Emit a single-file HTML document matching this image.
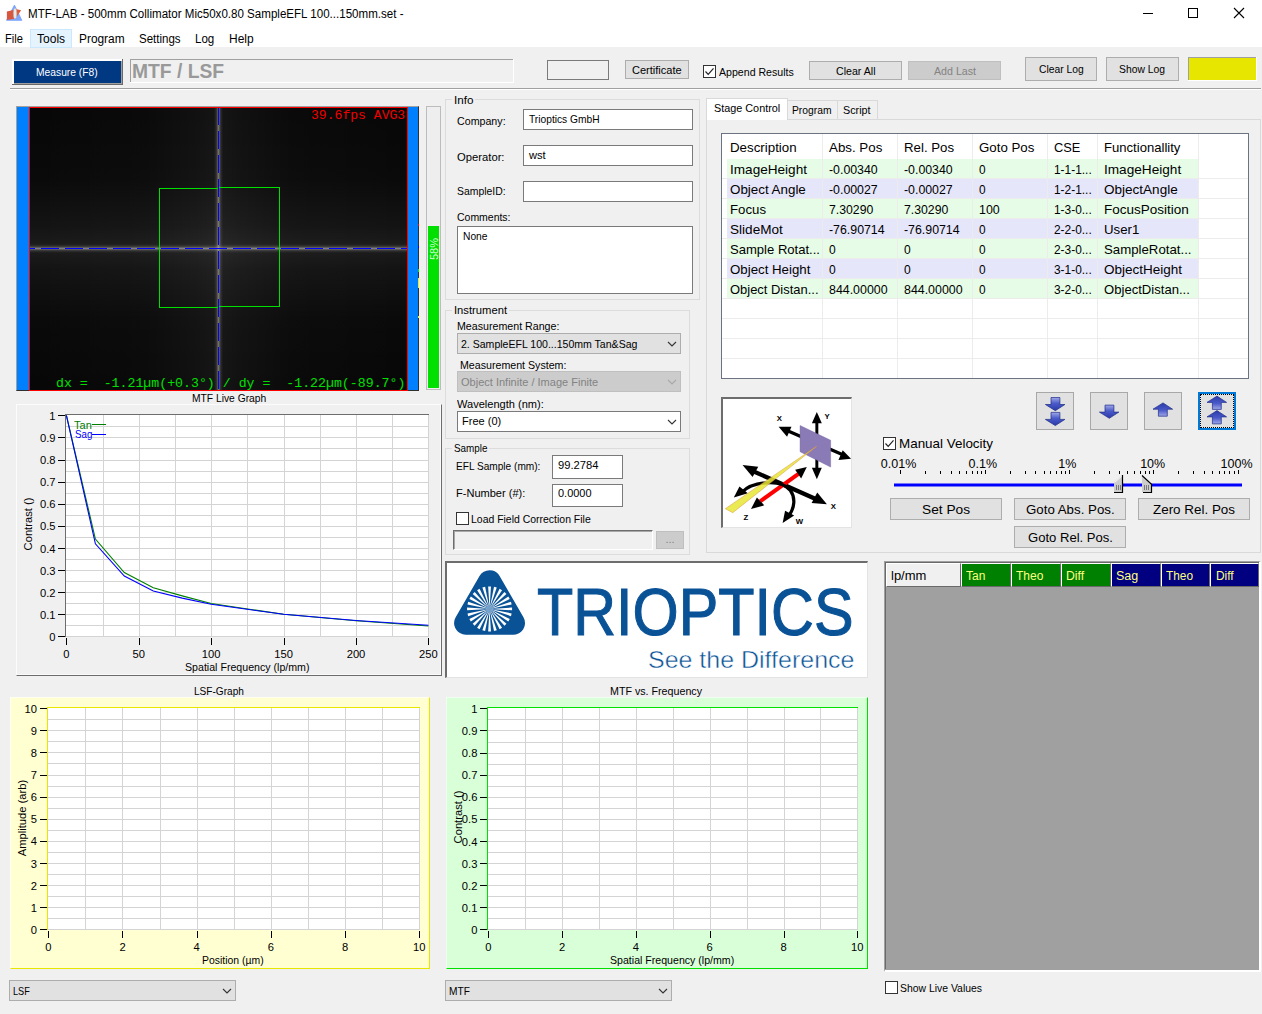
<!DOCTYPE html>
<html><head><meta charset="utf-8"><title>MTF-LAB</title>
<style>
html,body{margin:0;padding:0;}
body{width:1262px;height:1014px;position:relative;overflow:hidden;background:#f0f0f0;font-family:"Liberation Sans",sans-serif;}
body>div,body>svg{position:absolute;box-sizing:border-box;}
.t{white-space:pre;}
</style></head><body>
<div style="left:0px;top:0px;width:1262px;height:47px;background:#fff"></div>
<svg style="left:0;top:0" width="26" height="24" viewBox="0 0 26 24">
<polygon points="14.45,5.6 21.6,20.2 6.7,20.2" fill="#7fa6fa" stroke="#7fa6fa" stroke-width="1.2" stroke-linejoin="round"/>
<polygon points="6.9,11.6 14.4,9.7 14.4,18.8 6.9,20.1" fill="#d8553e"/>
<polygon points="15.6,8.9 21.1,10.3 16.6,17" fill="#e0583a"/>
<ellipse cx="15.05" cy="13.5" rx="1.7" ry="5.3" fill="#e6e9ea" stroke="#b5a89e" stroke-width="0.5"/>
</svg>
<div class="t" style="left:27.60px;top:8.42px;font-size:12.5px;line-height:12.5px;color:#000;transform:scaleX(0.9251);transform-origin:0 0;">MTF-LAB - 500mm Collimator Mic50x0.80 SampleEFL 100...150mm.set -</div>
<div style="left:1143px;top:13px;width:10px;height:1px;background:#000"></div>
<div style="left:1188px;top:8px;width:10px;height:10px;border:1px solid #000"></div>
<svg style="left:1233px;top:7px" width="12" height="12" viewBox="0 0 12 12"><path d="M1,1 L11,11 M11,1 L1,11" stroke="#000" stroke-width="1.1"/></svg>
<div style="left:30px;top:29px;width:42px;height:19px;background:#e5f3ff;border:1px solid #cce8ff"></div>
<div class="t" style="left:5.30px;top:32.59px;font-size:12.3px;line-height:12.3px;color:#000;transform:scaleX(0.9028);transform-origin:0 0;">File</div>
<div class="t" style="left:36.80px;top:32.59px;font-size:12.3px;line-height:12.3px;color:#000;transform:scaleX(0.9785);transform-origin:0 0;">Tools</div>
<div class="t" style="left:79.20px;top:32.59px;font-size:12.3px;line-height:12.3px;color:#000;transform:scaleX(0.9670);transform-origin:0 0;">Program</div>
<div class="t" style="left:139.10px;top:32.59px;font-size:12.3px;line-height:12.3px;color:#000;transform:scaleX(0.9361);transform-origin:0 0;">Settings</div>
<div class="t" style="left:195.30px;top:32.59px;font-size:12.3px;line-height:12.3px;color:#000;transform:scaleX(0.9400);transform-origin:0 0;">Log</div>
<div class="t" style="left:229.00px;top:32.59px;font-size:12.3px;line-height:12.3px;color:#000;transform:scaleX(0.9725);transform-origin:0 0;">Help</div>
<div style="left:12px;top:59px;width:111px;height:26px;background:#696969"></div>
<div style="left:12px;top:59px;width:110px;height:25px;background:#fff"></div>
<div style="left:14px;top:61px;width:108px;height:23px;background:#a0a0a0"></div>
<div style="left:14px;top:61px;width:107px;height:22px;background:#003882"></div>
<div class="t" style="left:36.15px;top:66.09px;font-size:11.7px;line-height:11.7px;color:#fff;transform:scaleX(0.8795);transform-origin:0 0;">Measure (F8)</div>
<div style="left:130px;top:59px;width:384px;height:24px;background:#fff"></div>
<div style="left:130px;top:59px;width:383px;height:23px;background:#a0a0a0"></div>
<div style="left:131px;top:60px;width:382px;height:22px;background:#f0f0f0"></div>
<div class="t" style="left:131.90px;top:61.07px;font-size:20px;line-height:20px;color:#999;font-weight:700;transform:scaleX(0.9639);transform-origin:0 0;">MTF / LSF</div>
<div style="left:547px;top:60px;width:62px;height:20px;border:1px solid #7a7a7a;background:#f0f0f0"></div>
<div style="left:625px;top:60px;width:64px;height:19px;border:1px solid #adadad;background:#e1e1e1"></div>
<div class="t" style="left:631.65px;top:65.26px;font-size:11.5px;line-height:11.5px;color:#000;transform:scaleX(0.9598);transform-origin:0 0;">Certificate</div>
<div style="left:703px;top:65px;width:13px;height:13px;border:1px solid #333;background:#fff"></div>
<svg style="left:703px;top:65px" width="13" height="13" viewBox="0 0 13 13"><path d="M2.5,6.5 L5.2,9.3 L10.5,3.3" fill="none" stroke="#222" stroke-width="1.2"/></svg>
<div class="t" style="left:718.60px;top:67.01px;font-size:11.8px;line-height:11.8px;color:#000;transform:scaleX(0.8980);transform-origin:0 0;">Append Results</div>
<div style="left:809px;top:61px;width:93px;height:19px;border:1px solid #adadad;background:#e1e1e1"></div>
<div class="t" style="left:835.75px;top:66.26px;font-size:11.5px;line-height:11.5px;color:#000;transform:scaleX(0.9223);transform-origin:0 0;">Clear All</div>
<div style="left:908px;top:61px;width:93px;height:19px;border:1px solid #bfbfbf;background:#cccccc"></div>
<div class="t" style="left:933.50px;top:66.26px;font-size:11.5px;line-height:11.5px;color:#838383;transform:scaleX(0.9250);transform-origin:0 0;">Add Last</div>
<div style="left:1025px;top:57px;width:72px;height:24px;border:1px solid #adadad;background:#e1e1e1"></div>
<div class="t" style="left:1038.65px;top:64.26px;font-size:11.5px;line-height:11.5px;color:#000;transform:scaleX(0.8962);transform-origin:0 0;">Clear Log</div>
<div style="left:1106px;top:57px;width:73px;height:24px;border:1px solid #adadad;background:#e1e1e1"></div>
<div class="t" style="left:1119.30px;top:64.26px;font-size:11.5px;line-height:11.5px;color:#000;transform:scaleX(0.8992);transform-origin:0 0;">Show Log</div>
<div style="left:1188px;top:57px;width:69px;height:24px;background:#fff"></div>
<div style="left:1188px;top:57px;width:68px;height:23px;background:#a0a0a0"></div>
<div style="left:1189px;top:58px;width:67px;height:22px;background:#e6e600"></div>
<div style="left:10px;top:88px;width:1251px;height:1px;background:#a0a0a0"></div>
<div style="left:10px;top:89px;width:1251px;height:1px;background:#fff"></div>
<div style="left:16px;top:106px;width:403px;height:285px;background:#0080ff;border-top:1px solid #a0a0a0;border-left:1px solid #a0a0a0;border-right:1px solid #303030;border-bottom:1px solid #303030"></div>
<div style="left:29px;top:107px;width:379px;height:284px;background:#070707;border:1px solid #ff0000"></div>
<div style="left:30px;top:108px;width:377px;height:282px;background:linear-gradient(to bottom, rgba(255,255,255,0) 0%, rgba(255,255,255,0.012) 25%, rgba(255,255,255,0.05) 42%, rgba(255,255,255,0.085) 49.5%, rgba(255,255,255,0.05) 57%, rgba(255,255,255,0.012) 75%, rgba(255,255,255,0) 100%)"></div>
<div style="left:30px;top:108px;width:377px;height:282px;background:linear-gradient(to right, rgba(255,255,255,0) 0%, rgba(255,255,255,0.01) 30%, rgba(255,255,255,0.04) 44%, rgba(255,255,255,0.06) 50%, rgba(255,255,255,0.04) 56%, rgba(255,255,255,0.01) 70%, rgba(255,255,255,0) 100%)"></div>
<div style="left:30px;top:244px;width:377px;height:9px;background:linear-gradient(to bottom, rgba(200,200,200,0) 0%, rgba(200,200,200,0.12) 25%, rgba(220,220,220,0.5) 50%, rgba(200,200,200,0.12) 75%, rgba(200,200,200,0) 100%)"></div>
<div style="left:214px;top:108px;width:9px;height:282px;background:linear-gradient(to right, rgba(200,200,200,0) 0%, rgba(200,200,200,0.12) 25%, rgba(220,220,220,0.45) 50%, rgba(200,200,200,0.12) 75%, rgba(200,200,200,0) 100%)"></div>
<svg style="left:0;top:0" width="1262" height="420" viewBox="0 0 1262 420">
<g fill="none" stroke="#00e000" stroke-width="1" shape-rendering="crispEdges">
<path d="M218.5,188.5 H159.5 V307.5 H218.5"/>
<path d="M218.5,187.5 H279.5 V306.5 H218.5"/>
</g>
<g stroke="#0000ff" stroke-width="1.3" fill="none" shape-rendering="crispEdges">
<line x1="30" y1="248.5" x2="407" y2="248.5" stroke-dasharray="18 6" stroke-dashoffset="13"/>
<line x1="218.5" y1="108" x2="218.5" y2="390" stroke-dasharray="18 6" stroke-dashoffset="1"/>
</g>
</svg>
<div class="t" style="left:311.40px;top:109.04px;font-size:13px;line-height:13px;color:#f00000;font-family:'Liberation Mono',monospace;transform:scaleX(1.0061);transform-origin:0 0;">39.6fps AVG3</div>
<div class="t" style="left:55.80px;top:376.89px;font-size:13.2px;line-height:13.2px;color:#00e000;font-family:'Liberation Mono',monospace;transform:scaleX(1.0034);transform-origin:0 0;">dx =  -1.21µm(+0.3°) / dy =  -1.22µm(-89.7°)</div>
<div style="left:426px;top:106px;width:15px;height:284px;border:1px solid #bcbcbc;background:#eeeeee"></div>
<div style="left:418px;top:224px;width:1px;height:2px;background:#ff0000"></div>
<div style="left:418px;top:246px;width:1px;height:2px;background:#0000ff"></div>
<div style="left:418px;top:269px;width:1px;height:3px;background:#00e000"></div>
<div style="left:418px;top:278px;width:1px;height:10px;background:#f0f000"></div>
<div style="left:418px;top:316px;width:1px;height:2px;background:#f0f000"></div>
<div style="left:428px;top:226px;width:11px;height:162px;background:#00e000"></div>
<div class="t" style="left:433.5px;top:249px;width:0;height:0;"><div style="position:absolute;left:-12px;top:-6px;width:24px;height:12px;font-size:11px;line-height:12px;color:#d8ffd8;text-align:center;transform:rotate(-90deg);">58%</div></div>
<div class="t" style="left:191.50px;top:392.69px;font-size:11px;line-height:11px;color:#000;transform:scaleX(0.9337);transform-origin:0 0;">MTF Live Graph</div>
<div style="left:16px;top:404px;width:426px;height:272px;border-top:1px solid #fcfcfc;border-left:1px solid #fcfcfc;border-right:1px solid #6d6d6d;border-bottom:1px solid #6d6d6d;box-shadow:inset -1px -1px 0 #fafafa"></div>
<svg style="left:0;top:0" width="1262" height="1014" viewBox="0 0 1262 1014" shape-rendering="crispEdges"><rect x="66" y="415" width="363" height="222" fill="#fff"/><g fill="#d4d4d4"><rect x="103" y="415" width="1" height="222"/><rect x="139" y="415" width="1" height="222"/><rect x="175" y="415" width="1" height="222"/><rect x="211" y="415" width="1" height="222"/><rect x="247" y="415" width="1" height="222"/><rect x="284" y="415" width="1" height="222"/><rect x="320" y="415" width="1" height="222"/><rect x="356" y="415" width="1" height="222"/><rect x="392" y="415" width="1" height="222"/><rect x="428" y="415" width="1" height="222"/><rect x="66" y="636" width="363" height="1"/><rect x="66" y="625" width="363" height="1"/><rect x="66" y="614" width="363" height="1"/><rect x="66" y="603" width="363" height="1"/><rect x="66" y="592" width="363" height="1"/><rect x="66" y="581" width="363" height="1"/><rect x="66" y="570" width="363" height="1"/><rect x="66" y="559" width="363" height="1"/><rect x="66" y="548" width="363" height="1"/><rect x="66" y="537" width="363" height="1"/><rect x="66" y="526" width="363" height="1"/><rect x="66" y="515" width="363" height="1"/><rect x="66" y="504" width="363" height="1"/><rect x="66" y="493" width="363" height="1"/><rect x="66" y="482" width="363" height="1"/><rect x="66" y="471" width="363" height="1"/><rect x="66" y="460" width="363" height="1"/><rect x="66" y="448" width="363" height="1"/><rect x="66" y="437" width="363" height="1"/><rect x="66" y="426" width="363" height="1"/></g><rect x="65" y="414" width="364" height="1" fill="#6d6d6d"/><rect x="65" y="414" width="1" height="223" fill="#6d6d6d"/></svg>
<svg style="left:0;top:0" width="1262" height="1014"><polyline points="66.4,415.3 95.4,539.1 124.3,572.5 153.3,587.8 182.2,595.9 211.2,603.5 283.6,614.3 356.0,620.7 428.4,626.0" fill="none" stroke="#008000" stroke-width="1.1"/><polyline points="66.4,415.3 95.4,543.8 124.3,576.0 153.3,591.1 182.2,598.1 211.2,604.3 283.6,614.3 356.0,620.5 428.4,625.3" fill="none" stroke="#0000ff" stroke-width="1.1"/><line x1="92" y1="424.5" x2="106" y2="424.5" stroke="#008000" stroke-width="1"/><line x1="92" y1="434.5" x2="106" y2="434.5" stroke="#0000ff" stroke-width="1"/></svg>
<div class="t" style="left:74.20px;top:419.69px;font-size:11px;line-height:11px;color:#008000;transform:scaleX(1.0028);transform-origin:0 0;">Tan</div>
<div class="t" style="left:74.70px;top:428.69px;font-size:11px;line-height:11px;color:#0000ff;transform:scaleX(0.8836);transform-origin:0 0;">Sag</div>
<svg style="left:0;top:0" width="1262" height="1014" shape-rendering="crispEdges"><g fill="#000"><rect x="58" y="636" width="7" height="1"/><rect x="58" y="614" width="7" height="1"/><rect x="58" y="592" width="7" height="1"/><rect x="58" y="570" width="7" height="1"/><rect x="58" y="548" width="7" height="1"/><rect x="58" y="526" width="7" height="1"/><rect x="58" y="504" width="7" height="1"/><rect x="58" y="482" width="7" height="1"/><rect x="58" y="460" width="7" height="1"/><rect x="58" y="437" width="7" height="1"/><rect x="58" y="415" width="7" height="1"/><rect x="66" y="638" width="1" height="7"/><rect x="139" y="638" width="1" height="7"/><rect x="211" y="638" width="1" height="7"/><rect x="284" y="638" width="1" height="7"/><rect x="356" y="638" width="1" height="7"/><rect x="428" y="638" width="1" height="7"/></g></svg>
<div class="t" style="left:49.37px;top:631.52px;font-size:11.2px;line-height:11.2px;color:#000;">0</div>
<div class="t" style="left:40.04px;top:609.52px;font-size:11.2px;line-height:11.2px;color:#000;">0.1</div>
<div class="t" style="left:40.04px;top:587.52px;font-size:11.2px;line-height:11.2px;color:#000;">0.2</div>
<div class="t" style="left:40.04px;top:565.52px;font-size:11.2px;line-height:11.2px;color:#000;">0.3</div>
<div class="t" style="left:40.04px;top:543.52px;font-size:11.2px;line-height:11.2px;color:#000;">0.4</div>
<div class="t" style="left:40.04px;top:520.52px;font-size:11.2px;line-height:11.2px;color:#000;">0.5</div>
<div class="t" style="left:40.04px;top:498.52px;font-size:11.2px;line-height:11.2px;color:#000;">0.6</div>
<div class="t" style="left:40.04px;top:476.52px;font-size:11.2px;line-height:11.2px;color:#000;">0.7</div>
<div class="t" style="left:40.04px;top:454.52px;font-size:11.2px;line-height:11.2px;color:#000;">0.8</div>
<div class="t" style="left:40.04px;top:432.52px;font-size:11.2px;line-height:11.2px;color:#000;">0.9</div>
<div class="t" style="left:49.37px;top:410.52px;font-size:11.2px;line-height:11.2px;color:#000;">1</div>
<div class="t" style="left:63.28px;top:648.52px;font-size:11.2px;line-height:11.2px;color:#000;">0</div>
<div class="t" style="left:132.57px;top:648.52px;font-size:11.2px;line-height:11.2px;color:#000;">50</div>
<div class="t" style="left:201.86px;top:648.52px;font-size:11.2px;line-height:11.2px;color:#000;">100</div>
<div class="t" style="left:274.26px;top:648.52px;font-size:11.2px;line-height:11.2px;color:#000;">150</div>
<div class="t" style="left:346.66px;top:648.52px;font-size:11.2px;line-height:11.2px;color:#000;">200</div>
<div class="t" style="left:419.06px;top:648.52px;font-size:11.2px;line-height:11.2px;color:#000;">250</div>
<div class="t" style="left:184.65px;top:661.52px;font-size:11.2px;line-height:11.2px;color:#000;transform:scaleX(0.9490);transform-origin:0 0;">Spatial Frequency (lp/mm)</div>
<div class="t" style="left:27.5px;top:524px;width:0;height:0;"><div style="position:absolute;left:-40px;top:-7px;width:80px;height:14px;font-size:11.2px;line-height:14px;text-align:center;transform:rotate(-90deg);">Contrast ()</div></div>
<div style="left:445px;top:99px;width:255px;height:201px;border:1px solid #dcdcdc"></div>
<div style="left:451.8px;top:98px;width:23.5px;height:3px;background:#f0f0f0"></div>
<div class="t" style="left:453.80px;top:95.26px;font-size:11.5px;line-height:11.5px;color:#000;transform:scaleX(1.0163);transform-origin:0 0;">Info</div>
<div class="t" style="left:456.70px;top:116.26px;font-size:11.5px;line-height:11.5px;color:#000;transform:scaleX(0.9271);transform-origin:0 0;">Company:</div>
<div class="t" style="left:456.70px;top:152.26px;font-size:11.5px;line-height:11.5px;color:#000;transform:scaleX(0.9778);transform-origin:0 0;">Operator:</div>
<div class="t" style="left:456.70px;top:186.26px;font-size:11.5px;line-height:11.5px;color:#000;transform:scaleX(0.9052);transform-origin:0 0;">SampleID:</div>
<div class="t" style="left:456.70px;top:212.26px;font-size:11.5px;line-height:11.5px;color:#000;transform:scaleX(0.9099);transform-origin:0 0;">Comments:</div>
<div style="left:523px;top:109px;width:170px;height:21px;border:1px solid #7a7a7a;background:#fff"></div>
<div style="left:523px;top:145px;width:170px;height:21px;border:1px solid #7a7a7a;background:#fff"></div>
<div style="left:523px;top:181px;width:170px;height:21px;border:1px solid #7a7a7a;background:#fff"></div>
<div style="left:457px;top:226px;width:236px;height:68px;border:1px solid #7a7a7a;background:#fff"></div>
<div class="t" style="left:528.80px;top:114.26px;font-size:11.5px;line-height:11.5px;color:#000;transform:scaleX(0.8886);transform-origin:0 0;">Trioptics GmbH</div>
<div class="t" style="left:528.80px;top:150.26px;font-size:11.5px;line-height:11.5px;color:#000;transform:scaleX(0.9681);transform-origin:0 0;">wst</div>
<div class="t" style="left:462.50px;top:231.26px;font-size:11.5px;line-height:11.5px;color:#000;transform:scaleX(0.8909);transform-origin:0 0;">None</div>
<div style="left:445px;top:310px;width:245px;height:129px;border:1px solid #dcdcdc"></div>
<div style="left:451.6px;top:309px;width:57px;height:3px;background:#f0f0f0"></div>
<div class="t" style="left:453.60px;top:305.26px;font-size:11.5px;line-height:11.5px;color:#000;transform:scaleX(0.9756);transform-origin:0 0;">Instrument</div>
<div class="t" style="left:456.50px;top:321.26px;font-size:11.5px;line-height:11.5px;color:#000;transform:scaleX(0.9259);transform-origin:0 0;">Measurement Range:</div>
<div style="left:457px;top:333px;width:224px;height:21px;border:1px solid #adadad;background:#e1e1e1"></div>
<div class="t" style="left:460.90px;top:339.26px;font-size:11.5px;line-height:11.5px;color:#000;transform:scaleX(0.9167);transform-origin:0 0;">2. SampleEFL 100...150mm Tan&amp;Sag</div>
<svg style="left:667px;top:340px" width="10" height="8" viewBox="0 0 10 8"><path d="M1,2 L5,6 L9,2" fill="none" stroke="#333" stroke-width="1.1"/></svg>
<div class="t" style="left:459.60px;top:360.26px;font-size:11.5px;line-height:11.5px;color:#000;transform:scaleX(0.9248);transform-origin:0 0;">Measurement System:</div>
<div style="left:457px;top:371px;width:224px;height:21px;border:1px solid #bfbfbf;background:#cccccc"></div>
<div class="t" style="left:460.90px;top:377.26px;font-size:11.5px;line-height:11.5px;color:#838383;transform:scaleX(0.9582);transform-origin:0 0;">Object Infinite / Image Finite</div>
<svg style="left:667px;top:378px" width="10" height="8" viewBox="0 0 10 8"><path d="M1,2 L5,6 L9,2" fill="none" stroke="#a8a8a8" stroke-width="1.1"/></svg>
<div class="t" style="left:456.50px;top:399.26px;font-size:11.5px;line-height:11.5px;color:#000;transform:scaleX(0.9609);transform-origin:0 0;">Wavelength (nm):</div>
<div style="left:457px;top:411px;width:224px;height:21px;border:1px solid #7a7a7a;background:#fff"></div>
<div class="t" style="left:462.20px;top:416.26px;font-size:11.5px;line-height:11.5px;color:#000;transform:scaleX(0.9583);transform-origin:0 0;">Free (0)</div>
<svg style="left:667px;top:418px" width="10" height="8" viewBox="0 0 10 8"><path d="M1,2 L5,6 L9,2" fill="none" stroke="#333" stroke-width="1.1"/></svg>
<div style="left:445px;top:448px;width:245px;height:107px;border:1px solid #dcdcdc"></div>
<div style="left:451.6px;top:447px;width:37.5px;height:3px;background:#f0f0f0"></div>
<div class="t" style="left:453.60px;top:443.26px;font-size:11.5px;line-height:11.5px;color:#000;transform:scaleX(0.8590);transform-origin:0 0;">Sample</div>
<div class="t" style="left:455.70px;top:461.26px;font-size:11.5px;line-height:11.5px;color:#000;transform:scaleX(0.8786);transform-origin:0 0;">EFL Sample (mm):</div>
<div style="left:552px;top:455px;width:71px;height:24px;border:1px solid #7a7a7a;background:#fff"></div>
<div class="t" style="left:557.60px;top:460.26px;font-size:11.5px;line-height:11.5px;color:#000;transform:scaleX(0.9741);transform-origin:0 0;">99.2784</div>
<div class="t" style="left:455.70px;top:488.26px;font-size:11.5px;line-height:11.5px;color:#000;transform:scaleX(0.9598);transform-origin:0 0;">F-Number (#):</div>
<div style="left:552px;top:484px;width:71px;height:23px;border:1px solid #7a7a7a;background:#fff"></div>
<div class="t" style="left:557.60px;top:488.26px;font-size:11.5px;line-height:11.5px;color:#000;transform:scaleX(0.9520);transform-origin:0 0;">0.0000</div>
<div style="left:456px;top:512px;width:13px;height:13px;border:1px solid #333;background:#fff"></div>
<div class="t" style="left:471.40px;top:514.26px;font-size:11.5px;line-height:11.5px;color:#000;transform:scaleX(0.9091);transform-origin:0 0;">Load Field Correction File</div>
<div style="left:453px;top:530px;width:200px;height:20px;border-top:1px solid #6d6d6d;border-left:1px solid #6d6d6d;border-bottom:1px solid #fff;border-right:1px solid #fff;background:#f0f0f0;box-shadow:inset 1px 1px 0 #a8a8a8"></div>
<div style="left:656px;top:531px;width:28px;height:18px;border:1px solid #bfbfbf;background:#cccccc"></div>
<div class="t" style="left:665.41px;top:533.69px;font-size:11px;line-height:11px;color:#838383;">...</div>
<div style="left:706px;top:119px;width:555px;height:434px;border:1px solid #d9d9d9"></div>
<div style="left:787px;top:100px;width:51px;height:20px;border:1px solid #d9d9d9;background:#f0f0f0"></div>
<div style="left:837px;top:100px;width:41px;height:20px;border:1px solid #d9d9d9;background:#f0f0f0"></div>
<div style="left:706px;top:98px;width:82px;height:22px;border:1px solid #d9d9d9;border-bottom:none;background:#fff"></div>
<div class="t" style="left:713.60px;top:103.26px;font-size:11.5px;line-height:11.5px;color:#000;transform:scaleX(0.9413);transform-origin:0 0;">Stage Control</div>
<div class="t" style="left:791.50px;top:105.26px;font-size:11.5px;line-height:11.5px;color:#000;transform:scaleX(0.8955);transform-origin:0 0;">Program</div>
<div class="t" style="left:843.20px;top:105.26px;font-size:11.5px;line-height:11.5px;color:#000;transform:scaleX(0.9386);transform-origin:0 0;">Script</div>
<div style="left:721px;top:133px;width:528px;height:246px;border:1px solid #6b7280;background:#fff"></div>
<svg style="left:0;top:0" width="1262" height="1014"><rect x="727" y="159" width="471" height="20" fill="#e6fce6"/><rect x="727" y="179" width="471" height="20" fill="#e6e6fa"/><rect x="727" y="199" width="471" height="20" fill="#e6fce6"/><rect x="727" y="219" width="471" height="20" fill="#e6e6fa"/><rect x="727" y="239" width="471" height="19" fill="#e6fce6"/><rect x="727" y="258" width="471" height="20" fill="#e6e6fa"/><rect x="727" y="278" width="471" height="20" fill="#e6fce6"/><g stroke="#ececec" stroke-width="1" shape-rendering="crispEdges"><line x1="722" y1="178.6" x2="1248" y2="178.6"/><line x1="722" y1="198.5" x2="1248" y2="198.5"/><line x1="722" y1="218.5" x2="1248" y2="218.5"/><line x1="722" y1="238.5" x2="1248" y2="238.5"/><line x1="722" y1="258.5" x2="1248" y2="258.5"/><line x1="722" y1="278.5" x2="1248" y2="278.5"/><line x1="722" y1="298.5" x2="1248" y2="298.5"/><line x1="722" y1="318.5" x2="1248" y2="318.5"/><line x1="722" y1="338.5" x2="1248" y2="338.5"/><line x1="722" y1="358.5" x2="1248" y2="358.5"/><line x1="822.5" y1="134" x2="822.5" y2="378"/><line x1="897.2" y1="134" x2="897.2" y2="378"/><line x1="972.6" y1="134" x2="972.6" y2="378"/><line x1="1047.4" y1="134" x2="1047.4" y2="378"/><line x1="1097.5" y1="134" x2="1097.5" y2="378"/><line x1="1198.0" y1="134" x2="1198.0" y2="378"/></g></svg>
<div class="t" style="left:729.50px;top:140.57px;font-size:13.5px;line-height:13.5px;color:#000;transform:scaleX(0.9862);transform-origin:0 0;">Description</div>
<div class="t" style="left:829.00px;top:140.57px;font-size:13.5px;line-height:13.5px;color:#000;transform:scaleX(0.9865);transform-origin:0 0;">Abs. Pos</div>
<div class="t" style="left:904.10px;top:140.57px;font-size:13.5px;line-height:13.5px;color:#000;transform:scaleX(0.9818);transform-origin:0 0;">Rel. Pos</div>
<div class="t" style="left:979.10px;top:140.57px;font-size:13.5px;line-height:13.5px;color:#000;transform:scaleX(0.9826);transform-origin:0 0;">Goto Pos</div>
<div class="t" style="left:1054.00px;top:140.57px;font-size:13.5px;line-height:13.5px;color:#000;transform:scaleX(0.9472);transform-origin:0 0;">CSE</div>
<div class="t" style="left:1103.90px;top:140.57px;font-size:13.5px;line-height:13.5px;color:#000;transform:scaleX(0.9696);transform-origin:0 0;">Functionallity</div>
<div class="t" style="left:729.50px;top:162.57px;font-size:13.5px;line-height:13.5px;color:#000;transform:scaleX(1.0059);transform-origin:0 0;">ImageHeight</div>
<div class="t" style="left:829.00px;top:162.57px;font-size:13.5px;line-height:13.5px;color:#000;transform:scaleX(0.9137);transform-origin:0 0;">-0.00340</div>
<div class="t" style="left:904.10px;top:162.57px;font-size:13.5px;line-height:13.5px;color:#000;transform:scaleX(0.9137);transform-origin:0 0;">-0.00340</div>
<div class="t" style="left:979.10px;top:162.57px;font-size:13.5px;line-height:13.5px;color:#000;transform:scaleX(0.8782);transform-origin:0 0;">0</div>
<div class="t" style="left:1054.00px;top:162.57px;font-size:13.5px;line-height:13.5px;color:#000;transform:scaleX(0.8812);transform-origin:0 0;">1-1-1...</div>
<div class="t" style="left:1103.90px;top:162.57px;font-size:13.5px;line-height:13.5px;color:#000;transform:scaleX(1.0085);transform-origin:0 0;">ImageHeight</div>
<div class="t" style="left:729.50px;top:182.57px;font-size:13.5px;line-height:13.5px;color:#000;transform:scaleX(0.9900);transform-origin:0 0;">Object Angle</div>
<div class="t" style="left:829.00px;top:182.57px;font-size:13.5px;line-height:13.5px;color:#000;transform:scaleX(0.9137);transform-origin:0 0;">-0.00027</div>
<div class="t" style="left:904.10px;top:182.57px;font-size:13.5px;line-height:13.5px;color:#000;transform:scaleX(0.9137);transform-origin:0 0;">-0.00027</div>
<div class="t" style="left:979.10px;top:182.57px;font-size:13.5px;line-height:13.5px;color:#000;transform:scaleX(0.8782);transform-origin:0 0;">0</div>
<div class="t" style="left:1054.00px;top:182.57px;font-size:13.5px;line-height:13.5px;color:#000;transform:scaleX(0.8812);transform-origin:0 0;">1-2-1...</div>
<div class="t" style="left:1103.90px;top:182.57px;font-size:13.5px;line-height:13.5px;color:#000;transform:scaleX(1.0021);transform-origin:0 0;">ObjectAngle</div>
<div class="t" style="left:729.50px;top:202.57px;font-size:13.5px;line-height:13.5px;color:#000;transform:scaleX(0.9792);transform-origin:0 0;">Focus</div>
<div class="t" style="left:829.00px;top:202.57px;font-size:13.5px;line-height:13.5px;color:#000;transform:scaleX(0.9076);transform-origin:0 0;">7.30290</div>
<div class="t" style="left:904.10px;top:202.57px;font-size:13.5px;line-height:13.5px;color:#000;transform:scaleX(0.9076);transform-origin:0 0;">7.30290</div>
<div class="t" style="left:979.10px;top:202.57px;font-size:13.5px;line-height:13.5px;color:#000;transform:scaleX(0.9187);transform-origin:0 0;">100</div>
<div class="t" style="left:1054.00px;top:202.57px;font-size:13.5px;line-height:13.5px;color:#000;transform:scaleX(0.8812);transform-origin:0 0;">1-3-0...</div>
<div class="t" style="left:1103.90px;top:202.57px;font-size:13.5px;line-height:13.5px;color:#000;">FocusPosition</div>
<div class="t" style="left:729.50px;top:222.57px;font-size:13.5px;line-height:13.5px;color:#000;transform:scaleX(1.0051);transform-origin:0 0;">SlideMot</div>
<div class="t" style="left:829.00px;top:222.57px;font-size:13.5px;line-height:13.5px;color:#000;transform:scaleX(0.9143);transform-origin:0 0;">-76.90714</div>
<div class="t" style="left:904.10px;top:222.57px;font-size:13.5px;line-height:13.5px;color:#000;transform:scaleX(0.9143);transform-origin:0 0;">-76.90714</div>
<div class="t" style="left:979.10px;top:222.57px;font-size:13.5px;line-height:13.5px;color:#000;transform:scaleX(0.8782);transform-origin:0 0;">0</div>
<div class="t" style="left:1054.00px;top:222.57px;font-size:13.5px;line-height:13.5px;color:#000;transform:scaleX(0.8812);transform-origin:0 0;">2-2-0...</div>
<div class="t" style="left:1103.90px;top:222.57px;font-size:13.5px;line-height:13.5px;color:#000;transform:scaleX(0.9801);transform-origin:0 0;">User1</div>
<div class="t" style="left:729.50px;top:242.57px;font-size:13.5px;line-height:13.5px;color:#000;transform:scaleX(0.9673);transform-origin:0 0;">Sample Rotat...</div>
<div class="t" style="left:829.00px;top:242.57px;font-size:13.5px;line-height:13.5px;color:#000;transform:scaleX(0.8915);transform-origin:0 0;">0</div>
<div class="t" style="left:904.10px;top:242.57px;font-size:13.5px;line-height:13.5px;color:#000;transform:scaleX(0.8915);transform-origin:0 0;">0</div>
<div class="t" style="left:979.10px;top:242.57px;font-size:13.5px;line-height:13.5px;color:#000;transform:scaleX(0.8782);transform-origin:0 0;">0</div>
<div class="t" style="left:1054.00px;top:242.57px;font-size:13.5px;line-height:13.5px;color:#000;transform:scaleX(0.8812);transform-origin:0 0;">2-3-0...</div>
<div class="t" style="left:1103.90px;top:242.57px;font-size:13.5px;line-height:13.5px;color:#000;transform:scaleX(0.9799);transform-origin:0 0;">SampleRotat...</div>
<div class="t" style="left:729.50px;top:262.57px;font-size:13.5px;line-height:13.5px;color:#000;transform:scaleX(0.9829);transform-origin:0 0;">Object Height</div>
<div class="t" style="left:829.00px;top:262.57px;font-size:13.5px;line-height:13.5px;color:#000;transform:scaleX(0.8915);transform-origin:0 0;">0</div>
<div class="t" style="left:904.10px;top:262.57px;font-size:13.5px;line-height:13.5px;color:#000;transform:scaleX(0.8915);transform-origin:0 0;">0</div>
<div class="t" style="left:979.10px;top:262.57px;font-size:13.5px;line-height:13.5px;color:#000;transform:scaleX(0.8782);transform-origin:0 0;">0</div>
<div class="t" style="left:1054.00px;top:262.57px;font-size:13.5px;line-height:13.5px;color:#000;transform:scaleX(0.8812);transform-origin:0 0;">3-1-0...</div>
<div class="t" style="left:1103.90px;top:262.57px;font-size:13.5px;line-height:13.5px;color:#000;">ObjectHeight</div>
<div class="t" style="left:729.50px;top:282.57px;font-size:13.5px;line-height:13.5px;color:#000;transform:scaleX(0.9589);transform-origin:0 0;">Object Distan...</div>
<div class="t" style="left:829.00px;top:282.57px;font-size:13.5px;line-height:13.5px;color:#000;transform:scaleX(0.9181);transform-origin:0 0;">844.00000</div>
<div class="t" style="left:904.10px;top:282.57px;font-size:13.5px;line-height:13.5px;color:#000;transform:scaleX(0.9181);transform-origin:0 0;">844.00000</div>
<div class="t" style="left:979.10px;top:282.57px;font-size:13.5px;line-height:13.5px;color:#000;transform:scaleX(0.8782);transform-origin:0 0;">0</div>
<div class="t" style="left:1054.00px;top:282.57px;font-size:13.5px;line-height:13.5px;color:#000;transform:scaleX(0.8812);transform-origin:0 0;">3-2-0...</div>
<div class="t" style="left:1103.90px;top:282.57px;font-size:13.5px;line-height:13.5px;color:#000;transform:scaleX(0.9701);transform-origin:0 0;">ObjectDistan...</div>
<div style="left:721px;top:397px;width:131px;height:131px;background:#fff;border-top:2px solid #6d6d6d;border-left:2px solid #6d6d6d;border-right:1px solid #e3e3e3;border-bottom:1px solid #e3e3e3"></div>
<svg style="left:718px;top:394px" width="138" height="136" viewBox="0 0 1029 1014">
<g fill="#000" stroke="none">
<!-- Y arrow -->
<rect x="726" y="200" width="22" height="370"/>
<polygon points="737,135 700,218 774,218"/>
<polygon points="737,635 700,550 774,550"/>
<!-- top X arrow -->
<line x1="510" y1="270" x2="935" y2="455" stroke="#000" stroke-width="24"/>
<polygon points="452,245 548,245 515,318"/>
<polygon points="992,482 930,420 898,492"/>
</g>
<polygon points="612,235 840,345 840,545 612,430" fill="#8a7ab5" stroke="#6c5d9c" stroke-width="3"/>
<!-- big X arrow -->
<line x1="250" y1="570" x2="745" y2="790" stroke="#000" stroke-width="32"/>
<polygon points="183,530 300,542 258,618" fill="#000"/>
<polygon points="812,822 698,812 740,735" fill="#000"/>
<!-- red arrow -->
<line x1="315" y1="800" x2="600" y2="595" stroke="#ff0000" stroke-width="30"/>
<polygon points="246,857 290,772 345,830" fill="#000"/>
<polygon points="662,545 575,565 620,630" fill="#000"/>
<!-- W curve -->
<path d="M175,735 C260,650 470,630 540,720 C580,775 570,850 530,905" fill="none" stroke="#000" stroke-width="24"/>
<polygon points="118,772 160,690 222,740" fill="#000"/>
<polygon points="482,962 500,870 568,905" fill="#000"/>
<!-- beam -->
<polygon points="55,855 110,885 735,390" fill="#e6e635" fill-opacity="0.85" stroke="#e09a40" stroke-width="4"/>
<g font-family="Liberation Sans" font-weight="700" font-size="58" fill="#000">
<text x="438" y="205">X</text><text x="795" y="190">Y</text><text x="840" y="858">X</text><text x="190" y="940">Z</text><text x="580" y="968">W</text>
</g>
</svg>
<div style="left:1036px;top:392px;width:38px;height:38px;border:1px solid #a8a8a8;background:#e1e1e1"></div>
<svg style="left:1036px;top:392px" width="38" height="38" viewBox="0 0 38 38"><defs><linearGradient id="gd1036" x1="0" y1="0" x2="0" y2="1"><stop offset="0" stop-color="#a0a8e8"/><stop offset="0.45" stop-color="#4a5ac8"/><stop offset="1" stop-color="#2a3aa8"/></linearGradient><linearGradient id="gu1036" x1="0" y1="1" x2="0" y2="0"><stop offset="0" stop-color="#a0a8e8"/><stop offset="0.45" stop-color="#4a5ac8"/><stop offset="1" stop-color="#2a3aa8"/></linearGradient></defs><path d="M15,5.5 H23.9 V12.5 H28.9 L19.3,18.7 L9.4,12.5 H15 Z" fill="url(#gd1036)" stroke="#1c2c88" stroke-width="0.7"/><path d="M15,20.4 H23.9 V27.4 H28.9 L19.3,33.599999999999994 L9.4,27.4 H15 Z" fill="url(#gd1036)" stroke="#1c2c88" stroke-width="0.7"/></svg>
<div style="left:1090px;top:392px;width:38px;height:38px;border:1px solid #a8a8a8;background:#e1e1e1"></div>
<svg style="left:1090px;top:392px" width="38" height="38" viewBox="0 0 38 38"><defs><linearGradient id="gd1090" x1="0" y1="0" x2="0" y2="1"><stop offset="0" stop-color="#a0a8e8"/><stop offset="0.45" stop-color="#4a5ac8"/><stop offset="1" stop-color="#2a3aa8"/></linearGradient><linearGradient id="gu1090" x1="0" y1="1" x2="0" y2="0"><stop offset="0" stop-color="#a0a8e8"/><stop offset="0.45" stop-color="#4a5ac8"/><stop offset="1" stop-color="#2a3aa8"/></linearGradient></defs><path d="M15,13.1 H23.9 V20.1 H28.9 L19.3,26.299999999999997 L9.4,20.1 H15 Z" fill="url(#gd1090)" stroke="#1c2c88" stroke-width="0.7"/></svg>
<div style="left:1144px;top:392px;width:38px;height:38px;border:1px solid #a8a8a8;background:#e1e1e1"></div>
<svg style="left:1144px;top:392px" width="38" height="38" viewBox="0 0 38 38"><defs><linearGradient id="gd1144" x1="0" y1="0" x2="0" y2="1"><stop offset="0" stop-color="#a0a8e8"/><stop offset="0.45" stop-color="#4a5ac8"/><stop offset="1" stop-color="#2a3aa8"/></linearGradient><linearGradient id="gu1144" x1="0" y1="1" x2="0" y2="0"><stop offset="0" stop-color="#a0a8e8"/><stop offset="0.45" stop-color="#4a5ac8"/><stop offset="1" stop-color="#2a3aa8"/></linearGradient></defs><path d="M19,10.9 L28.6,17.2 H23.3 V24.200000000000003 H14.4 V17.2 H9 Z" fill="url(#gu1144)" stroke="#1c2c88" stroke-width="0.7"/></svg>
<div style="left:1198px;top:392px;width:38px;height:38px;border:2px solid #0078d7;background:#e1e1e1"></div>
<div style="left:1200px;top:394px;width:34px;height:34px;border:1px dotted #000"></div>
<svg style="left:1198px;top:392px" width="38" height="38" viewBox="0 0 38 38"><defs><linearGradient id="gd1198" x1="0" y1="0" x2="0" y2="1"><stop offset="0" stop-color="#a0a8e8"/><stop offset="0.45" stop-color="#4a5ac8"/><stop offset="1" stop-color="#2a3aa8"/></linearGradient><linearGradient id="gu1198" x1="0" y1="1" x2="0" y2="0"><stop offset="0" stop-color="#a0a8e8"/><stop offset="0.45" stop-color="#4a5ac8"/><stop offset="1" stop-color="#2a3aa8"/></linearGradient></defs><path d="M19,4.1 L28.6,10.399999999999999 H23.3 V17.4 H14.4 V10.399999999999999 H9 Z" fill="url(#gu1198)" stroke="#1c2c88" stroke-width="0.7"/><path d="M19,18.6 L28.6,24.900000000000002 H23.3 V31.900000000000002 H14.4 V24.900000000000002 H9 Z" fill="url(#gu1198)" stroke="#1c2c88" stroke-width="0.7"/></svg>
<div style="left:883px;top:437px;width:13px;height:13px;border:1px solid #333;background:#fff"></div>
<svg style="left:883px;top:437px" width="13" height="13" viewBox="0 0 13 13"><path d="M2.5,6.5 L5.2,9.3 L10.5,3.3" fill="none" stroke="#222" stroke-width="1.2"/></svg>
<div class="t" style="left:899.30px;top:436.99px;font-size:13px;line-height:13px;color:#000;transform:scaleX(1.0323);transform-origin:0 0;">Manual Velocity</div>
<div class="t" style="left:880.87px;top:458.42px;font-size:12.5px;line-height:12.5px;color:#000;">0.01%</div>
<div class="t" style="left:968.55px;top:458.42px;font-size:12.5px;line-height:12.5px;color:#000;">0.1%</div>
<div class="t" style="left:1058.26px;top:458.42px;font-size:12.5px;line-height:12.5px;color:#000;">1%</div>
<div class="t" style="left:1140.18px;top:458.42px;font-size:12.5px;line-height:12.5px;color:#000;">10%</div>
<div class="t" style="left:1220.61px;top:458.42px;font-size:12.5px;line-height:12.5px;color:#000;">100%</div>
<svg style="left:0;top:0" width="1262" height="1014"><g stroke="#000" stroke-width="1" shape-rendering="crispEdges"><line x1="900.5" y1="470" x2="900.5" y2="474"/><line x1="925.5" y1="471" x2="925.5" y2="474"/><line x1="940.5" y1="471" x2="940.5" y2="474"/><line x1="951.5" y1="471" x2="951.5" y2="474"/><line x1="959.5" y1="471" x2="959.5" y2="474"/><line x1="966.5" y1="471" x2="966.5" y2="474"/><line x1="972.5" y1="471" x2="972.5" y2="474"/><line x1="977.5" y1="471" x2="977.5" y2="474"/><line x1="981.5" y1="471" x2="981.5" y2="474"/><line x1="985.5" y1="470" x2="985.5" y2="474"/><line x1="1010.5" y1="471" x2="1010.5" y2="474"/><line x1="1025.5" y1="471" x2="1025.5" y2="474"/><line x1="1035.5" y1="471" x2="1035.5" y2="474"/><line x1="1044.5" y1="471" x2="1044.5" y2="474"/><line x1="1050.5" y1="471" x2="1050.5" y2="474"/><line x1="1056.5" y1="471" x2="1056.5" y2="474"/><line x1="1061.5" y1="471" x2="1061.5" y2="474"/><line x1="1065.5" y1="471" x2="1065.5" y2="474"/><line x1="1069.5" y1="470" x2="1069.5" y2="474"/><line x1="1094.5" y1="471" x2="1094.5" y2="474"/><line x1="1109.5" y1="471" x2="1109.5" y2="474"/><line x1="1119.5" y1="471" x2="1119.5" y2="474"/><line x1="1127.5" y1="471" x2="1127.5" y2="474"/><line x1="1134.5" y1="471" x2="1134.5" y2="474"/><line x1="1140.5" y1="471" x2="1140.5" y2="474"/><line x1="1145.5" y1="471" x2="1145.5" y2="474"/><line x1="1149.5" y1="471" x2="1149.5" y2="474"/><line x1="1153.5" y1="470" x2="1153.5" y2="474"/><line x1="1178.5" y1="471" x2="1178.5" y2="474"/><line x1="1193.5" y1="471" x2="1193.5" y2="474"/><line x1="1204.5" y1="471" x2="1204.5" y2="474"/><line x1="1212.5" y1="471" x2="1212.5" y2="474"/><line x1="1219.5" y1="471" x2="1219.5" y2="474"/><line x1="1224.5" y1="471" x2="1224.5" y2="474"/><line x1="1229.5" y1="471" x2="1229.5" y2="474"/><line x1="1234.5" y1="471" x2="1234.5" y2="474"/><line x1="1238.5" y1="470" x2="1238.5" y2="474"/></g><rect x="894" y="483.5" width="348" height="3" fill="#0000ff"/><path d="M1114,482 L1122.5,475 V492 H1114 Z" fill="#cdcdcd"/><path d="M1114.5,482.5 L1122,476" stroke="#f8f8f8" stroke-width="1"/><path d="M1122.5,475 V492.5 H1114" fill="none" stroke="#000" stroke-width="1.2"/><path d="M1116.5,485 V490 M1118.5,485 V490 M1120.5,485 V490" stroke="#7a7a7a" stroke-width="1"/><path d="M1142,475 L1151.5,484 V492 H1142 Z" fill="#cdcdcd"/><path d="M1142,475.5 L1151.5,484.2 V492.5 H1143" fill="none" stroke="#000" stroke-width="1.2"/><path d="M1144.5,485 V490 M1146.5,485 V490 M1148.5,485 V490" stroke="#7a7a7a" stroke-width="1"/></svg>
<div style="left:890px;top:498px;width:112px;height:22px;border:1px solid #adadad;background:#e1e1e1"></div>
<div class="t" style="left:922.00px;top:502.99px;font-size:13px;line-height:13px;color:#000;transform:scaleX(1.0542);transform-origin:0 0;">Set Pos</div>
<div style="left:1014px;top:498px;width:112px;height:22px;border:1px solid #adadad;background:#e1e1e1"></div>
<div class="t" style="left:1025.70px;top:502.99px;font-size:13px;line-height:13px;color:#000;transform:scaleX(1.0217);transform-origin:0 0;">Goto Abs. Pos.</div>
<div style="left:1138px;top:498px;width:112px;height:22px;border:1px solid #adadad;background:#e1e1e1"></div>
<div class="t" style="left:1153.00px;top:502.99px;font-size:13px;line-height:13px;color:#000;transform:scaleX(1.0316);transform-origin:0 0;">Zero Rel. Pos</div>
<div style="left:1014px;top:526px;width:112px;height:22px;border:1px solid #adadad;background:#e1e1e1"></div>
<div class="t" style="left:1027.50px;top:530.99px;font-size:13px;line-height:13px;color:#000;transform:scaleX(1.0054);transform-origin:0 0;">Goto Rel. Pos.</div>
<div style="left:445px;top:561px;width:423px;height:117px;background:#fff;border-top:2px solid #6d6d6d;border-left:2px solid #6d6d6d;border-right:1px solid #e3e3e3;border-bottom:1px solid #e3e3e3"></div>
<svg style="left:444px;top:558px" width="100" height="84" viewBox="0 0 1207 1014">
<polygon points="550,287 262,785 838,785" fill="#0a5296" stroke="#0a5296" stroke-width="280" stroke-linejoin="round"/>
<g fill="#fff"><polygon points="550,615 532.9,343.5 567.1,343.5"/><polygon points="550,615 603.8,348.4 636.8,357.2"/><polygon points="550,615 670.9,371.4 700.5,388.4"/><polygon points="550,615 729.9,411.0 754.0,435.1"/><polygon points="550,615 776.6,464.5 793.6,494.1"/><polygon points="550,615 807.8,528.2 816.6,561.2"/><polygon points="550,615 821.5,597.9 821.5,632.1"/><polygon points="550,615 816.6,668.8 807.8,701.8"/><polygon points="550,615 793.6,735.9 776.6,765.5"/><polygon points="550,615 754.0,794.9 729.9,819.0"/><polygon points="550,615 700.5,841.6 670.9,858.6"/><polygon points="550,615 636.8,872.8 603.8,881.6"/><polygon points="550,615 567.1,886.5 532.9,886.5"/><polygon points="550,615 496.2,881.6 463.2,872.8"/><polygon points="550,615 429.1,858.6 399.5,841.6"/><polygon points="550,615 370.1,819.0 346.0,794.9"/><polygon points="550,615 323.4,765.5 306.4,735.9"/><polygon points="550,615 292.2,701.8 283.4,668.8"/><polygon points="550,615 278.5,632.1 278.5,597.9"/><polygon points="550,615 283.4,561.2 292.2,528.2"/><polygon points="550,615 306.4,494.1 323.4,464.5"/><polygon points="550,615 346.0,435.1 370.1,411.0"/><polygon points="550,615 399.5,388.4 429.1,371.4"/><polygon points="550,615 463.2,357.2 496.2,348.4"/></g>
<circle cx="550" cy="615" r="40" fill="#7aa7d0" opacity="0.6"/>
</svg>
<div class="t" style="left:536.80px;top:577.85px;font-size:67.5px;line-height:67.5px;color:#0a5296;transform:scaleX(0.8791);transform-origin:0 0;-webkit-text-stroke:1.1px #0a5296;">TRIOPTICS</div>
<div class="t" style="left:647.70px;top:648.26px;font-size:24.5px;line-height:24.5px;color:#0a5296;transform:scaleX(1.0193);transform-origin:0 0;-webkit-text-stroke:0.45px #fff;">See the Difference</div>
<div class="t" style="left:194.05px;top:685.52px;font-size:11.2px;line-height:11.2px;color:#000;transform:scaleX(0.9016);transform-origin:0 0;">LSF-Graph</div>
<div style="left:10px;top:697px;width:420px;height:272px;background:#ffffd2;border-top:1px solid #fffff0;border-left:1px solid #fffff0;border-right:1px solid #e6e600;border-bottom:1px solid #e6e600"></div>
<svg style="left:0;top:0" width="1262" height="1014" viewBox="0 0 1262 1014" shape-rendering="crispEdges"><rect x="48" y="708" width="372" height="222" fill="#fff"/><g fill="#d4d4d4"><rect x="85" y="708" width="1" height="222"/><rect x="122" y="708" width="1" height="222"/><rect x="160" y="708" width="1" height="222"/><rect x="197" y="708" width="1" height="222"/><rect x="234" y="708" width="1" height="222"/><rect x="271" y="708" width="1" height="222"/><rect x="308" y="708" width="1" height="222"/><rect x="345" y="708" width="1" height="222"/><rect x="382" y="708" width="1" height="222"/><rect x="419" y="708" width="1" height="222"/><rect x="48" y="929" width="372" height="1"/><rect x="48" y="918" width="372" height="1"/><rect x="48" y="907" width="372" height="1"/><rect x="48" y="896" width="372" height="1"/><rect x="48" y="885" width="372" height="1"/><rect x="48" y="874" width="372" height="1"/><rect x="48" y="863" width="372" height="1"/><rect x="48" y="852" width="372" height="1"/><rect x="48" y="841" width="372" height="1"/><rect x="48" y="830" width="372" height="1"/><rect x="48" y="819" width="372" height="1"/><rect x="48" y="808" width="372" height="1"/><rect x="48" y="797" width="372" height="1"/><rect x="48" y="786" width="372" height="1"/><rect x="48" y="775" width="372" height="1"/><rect x="48" y="763" width="372" height="1"/><rect x="48" y="752" width="372" height="1"/><rect x="48" y="741" width="372" height="1"/><rect x="48" y="730" width="372" height="1"/><rect x="48" y="719" width="372" height="1"/></g><rect x="47" y="707" width="373" height="1" fill="#e6e600"/><rect x="47" y="707" width="1" height="223" fill="#e6e600"/></svg>
<svg style="left:0;top:0" width="1262" height="1014" shape-rendering="crispEdges"><g fill="#000"><rect x="40" y="929" width="7" height="1"/><rect x="40" y="907" width="7" height="1"/><rect x="40" y="885" width="7" height="1"/><rect x="40" y="863" width="7" height="1"/><rect x="40" y="841" width="7" height="1"/><rect x="40" y="819" width="7" height="1"/><rect x="40" y="797" width="7" height="1"/><rect x="40" y="775" width="7" height="1"/><rect x="40" y="752" width="7" height="1"/><rect x="40" y="730" width="7" height="1"/><rect x="40" y="708" width="7" height="1"/><rect x="48" y="931" width="1" height="7"/><rect x="122" y="931" width="1" height="7"/><rect x="197" y="931" width="1" height="7"/><rect x="271" y="931" width="1" height="7"/><rect x="345" y="931" width="1" height="7"/><rect x="419" y="931" width="1" height="7"/></g></svg>
<div class="t" style="left:30.77px;top:924.52px;font-size:11.2px;line-height:11.2px;color:#000;">0</div>
<div class="t" style="left:30.77px;top:902.52px;font-size:11.2px;line-height:11.2px;color:#000;">1</div>
<div class="t" style="left:30.77px;top:880.52px;font-size:11.2px;line-height:11.2px;color:#000;">2</div>
<div class="t" style="left:30.77px;top:858.52px;font-size:11.2px;line-height:11.2px;color:#000;">3</div>
<div class="t" style="left:30.77px;top:835.52px;font-size:11.2px;line-height:11.2px;color:#000;">4</div>
<div class="t" style="left:30.77px;top:813.52px;font-size:11.2px;line-height:11.2px;color:#000;">5</div>
<div class="t" style="left:30.77px;top:791.52px;font-size:11.2px;line-height:11.2px;color:#000;">6</div>
<div class="t" style="left:30.77px;top:769.52px;font-size:11.2px;line-height:11.2px;color:#000;">7</div>
<div class="t" style="left:30.77px;top:747.52px;font-size:11.2px;line-height:11.2px;color:#000;">8</div>
<div class="t" style="left:30.77px;top:725.52px;font-size:11.2px;line-height:11.2px;color:#000;">9</div>
<div class="t" style="left:24.55px;top:703.52px;font-size:11.2px;line-height:11.2px;color:#000;">10</div>
<div class="t" style="left:45.18px;top:941.52px;font-size:11.2px;line-height:11.2px;color:#000;">0</div>
<div class="t" style="left:119.38px;top:941.52px;font-size:11.2px;line-height:11.2px;color:#000;">2</div>
<div class="t" style="left:193.58px;top:941.52px;font-size:11.2px;line-height:11.2px;color:#000;">4</div>
<div class="t" style="left:267.78px;top:941.52px;font-size:11.2px;line-height:11.2px;color:#000;">6</div>
<div class="t" style="left:341.98px;top:941.52px;font-size:11.2px;line-height:11.2px;color:#000;">8</div>
<div class="t" style="left:413.07px;top:941.52px;font-size:11.2px;line-height:11.2px;color:#000;">10</div>
<div class="t" style="left:202.15px;top:954.52px;font-size:11.2px;line-height:11.2px;color:#000;transform:scaleX(0.9329);transform-origin:0 0;">Position (µm)</div>
<div class="t" style="left:21.6px;top:817.7px;width:0;height:0;"><div style="position:absolute;left:-60px;top:-7px;width:120px;height:14px;font-size:11.2px;line-height:14px;text-align:center;transform:rotate(-90deg);">Amplitude (arb)</div></div>
<div class="t" style="left:610.20px;top:685.52px;font-size:11.2px;line-height:11.2px;color:#000;transform:scaleX(0.9548);transform-origin:0 0;">MTF vs. Frequency</div>
<div style="left:446px;top:697px;width:422px;height:272px;background:#d8ffd8;border-top:1px solid #f0fff0;border-left:1px solid #f0fff0;border-right:1px solid #00e000;border-bottom:1px solid #00e000"></div>
<svg style="left:0;top:0" width="1262" height="1014" viewBox="0 0 1262 1014" shape-rendering="crispEdges"><rect x="488" y="708" width="370" height="222" fill="#fff"/><g fill="#d4d4d4"><rect x="525" y="708" width="1" height="222"/><rect x="562" y="708" width="1" height="222"/><rect x="599" y="708" width="1" height="222"/><rect x="636" y="708" width="1" height="222"/><rect x="673" y="708" width="1" height="222"/><rect x="710" y="708" width="1" height="222"/><rect x="747" y="708" width="1" height="222"/><rect x="784" y="708" width="1" height="222"/><rect x="820" y="708" width="1" height="222"/><rect x="857" y="708" width="1" height="222"/><rect x="488" y="929" width="370" height="1"/><rect x="488" y="918" width="370" height="1"/><rect x="488" y="907" width="370" height="1"/><rect x="488" y="896" width="370" height="1"/><rect x="488" y="885" width="370" height="1"/><rect x="488" y="874" width="370" height="1"/><rect x="488" y="863" width="370" height="1"/><rect x="488" y="852" width="370" height="1"/><rect x="488" y="841" width="370" height="1"/><rect x="488" y="830" width="370" height="1"/><rect x="488" y="819" width="370" height="1"/><rect x="488" y="808" width="370" height="1"/><rect x="488" y="797" width="370" height="1"/><rect x="488" y="786" width="370" height="1"/><rect x="488" y="775" width="370" height="1"/><rect x="488" y="764" width="370" height="1"/><rect x="488" y="753" width="370" height="1"/><rect x="488" y="742" width="370" height="1"/><rect x="488" y="730" width="370" height="1"/><rect x="488" y="719" width="370" height="1"/></g><rect x="487" y="707" width="371" height="1" fill="#00e000"/><rect x="487" y="707" width="1" height="223" fill="#00e000"/></svg>
<svg style="left:0;top:0" width="1262" height="1014" shape-rendering="crispEdges"><g fill="#000"><rect x="480" y="929" width="7" height="1"/><rect x="480" y="907" width="7" height="1"/><rect x="480" y="885" width="7" height="1"/><rect x="480" y="863" width="7" height="1"/><rect x="480" y="841" width="7" height="1"/><rect x="480" y="819" width="7" height="1"/><rect x="480" y="797" width="7" height="1"/><rect x="480" y="775" width="7" height="1"/><rect x="480" y="753" width="7" height="1"/><rect x="480" y="730" width="7" height="1"/><rect x="480" y="708" width="7" height="1"/><rect x="488" y="931" width="1" height="7"/><rect x="562" y="931" width="1" height="7"/><rect x="636" y="931" width="1" height="7"/><rect x="710" y="931" width="1" height="7"/><rect x="784" y="931" width="1" height="7"/><rect x="857" y="931" width="1" height="7"/></g></svg>
<div class="t" style="left:471.17px;top:924.52px;font-size:11.2px;line-height:11.2px;color:#000;">0</div>
<div class="t" style="left:461.84px;top:902.52px;font-size:11.2px;line-height:11.2px;color:#000;">0.1</div>
<div class="t" style="left:461.84px;top:880.52px;font-size:11.2px;line-height:11.2px;color:#000;">0.2</div>
<div class="t" style="left:461.84px;top:858.52px;font-size:11.2px;line-height:11.2px;color:#000;">0.3</div>
<div class="t" style="left:461.84px;top:836.52px;font-size:11.2px;line-height:11.2px;color:#000;">0.4</div>
<div class="t" style="left:461.84px;top:813.52px;font-size:11.2px;line-height:11.2px;color:#000;">0.5</div>
<div class="t" style="left:461.84px;top:791.52px;font-size:11.2px;line-height:11.2px;color:#000;">0.6</div>
<div class="t" style="left:461.84px;top:769.52px;font-size:11.2px;line-height:11.2px;color:#000;">0.7</div>
<div class="t" style="left:461.84px;top:747.52px;font-size:11.2px;line-height:11.2px;color:#000;">0.8</div>
<div class="t" style="left:461.84px;top:725.52px;font-size:11.2px;line-height:11.2px;color:#000;">0.9</div>
<div class="t" style="left:471.17px;top:703.52px;font-size:11.2px;line-height:11.2px;color:#000;">1</div>
<div class="t" style="left:485.18px;top:941.52px;font-size:11.2px;line-height:11.2px;color:#000;">0</div>
<div class="t" style="left:558.98px;top:941.52px;font-size:11.2px;line-height:11.2px;color:#000;">2</div>
<div class="t" style="left:632.78px;top:941.52px;font-size:11.2px;line-height:11.2px;color:#000;">4</div>
<div class="t" style="left:706.58px;top:941.52px;font-size:11.2px;line-height:11.2px;color:#000;">6</div>
<div class="t" style="left:780.38px;top:941.52px;font-size:11.2px;line-height:11.2px;color:#000;">8</div>
<div class="t" style="left:851.07px;top:941.52px;font-size:11.2px;line-height:11.2px;color:#000;">10</div>
<div class="t" style="left:609.80px;top:954.52px;font-size:11.2px;line-height:11.2px;color:#000;transform:scaleX(0.9467);transform-origin:0 0;">Spatial Frequency (lp/mm)</div>
<div class="t" style="left:458.1px;top:816.9px;width:0;height:0;"><div style="position:absolute;left:-60px;top:-7px;width:120px;height:14px;font-size:11.2px;line-height:14px;text-align:center;transform:rotate(-90deg);">Contrast ()</div></div>
<div style="left:9px;top:980px;width:227px;height:21px;border:1px solid #adadad;background:#e1e1e1"></div>
<div class="t" style="left:12.70px;top:986.26px;font-size:11.5px;line-height:11.5px;color:#000;transform:scaleX(0.7964);transform-origin:0 0;">LSF</div>
<svg style="left:221.6px;top:987px" width="10" height="8" viewBox="0 0 10 8"><path d="M1,2 L5,6 L9,2" fill="none" stroke="#333" stroke-width="1.1"/></svg>
<div style="left:445px;top:980px;width:227px;height:21px;border:1px solid #adadad;background:#e1e1e1"></div>
<div class="t" style="left:448.70px;top:986.26px;font-size:11.5px;line-height:11.5px;color:#000;transform:scaleX(0.8841);transform-origin:0 0;">MTF</div>
<svg style="left:657.5px;top:987px" width="10" height="8" viewBox="0 0 10 8"><path d="M1,2 L5,6 L9,2" fill="none" stroke="#333" stroke-width="1.1"/></svg>
<div style="left:884px;top:561px;width:377px;height:411px;background:#a0a0a0;border-top:1px solid #a0a0a0;border-left:1px solid #a0a0a0;border-right:2px solid #fff;border-bottom:2px solid #fff"></div>
<div style="left:885px;top:562px;width:374px;height:407px;background:#a0a0a0;border-top:1px solid #696969;border-left:1px solid #696969"></div>
<div style="left:886px;top:563px;width:75px;height:24px;background:#f0f0f0;border-left:1px solid #fff;border-top:1px solid #fff;border-right:1px solid #696969;border-bottom:1px solid #696969"></div>
<div class="t" style="left:891.10px;top:569.84px;font-size:12px;line-height:12px;color:#000;transform:scaleX(1.0835);transform-origin:0 0;">lp/mm</div>
<div style="left:961px;top:563px;width:50px;height:24px;background:#008000;border-left:1px solid #fff;border-top:1px solid #fff;border-right:1px solid #696969;border-bottom:1px solid #696969"></div>
<div class="t" style="left:966.30px;top:569.84px;font-size:12px;line-height:12px;color:#ffff80;transform:scaleX(0.9969);transform-origin:0 0;">Tan</div>
<div style="left:1011px;top:563px;width:50px;height:24px;background:#008000;border-left:1px solid #fff;border-top:1px solid #fff;border-right:1px solid #696969;border-bottom:1px solid #696969"></div>
<div class="t" style="left:1016.00px;top:569.84px;font-size:12px;line-height:12px;color:#ffff80;transform:scaleX(0.9978);transform-origin:0 0;">Theo</div>
<div style="left:1061px;top:563px;width:50px;height:24px;background:#008000;border-left:1px solid #fff;border-top:1px solid #fff;border-right:1px solid #696969;border-bottom:1px solid #696969"></div>
<div class="t" style="left:1066.30px;top:569.84px;font-size:12px;line-height:12px;color:#ffff80;transform:scaleX(1.0170);transform-origin:0 0;">Diff</div>
<div style="left:1111px;top:563px;width:50px;height:24px;background:#000080;border-left:1px solid #fff;border-top:1px solid #fff;border-right:1px solid #696969;border-bottom:1px solid #696969"></div>
<div class="t" style="left:1116.40px;top:569.84px;font-size:12px;line-height:12px;color:#ffff80;transform:scaleX(1.0440);transform-origin:0 0;">Sag</div>
<div style="left:1161px;top:563px;width:49px;height:24px;background:#000080;border-left:1px solid #fff;border-top:1px solid #fff;border-right:1px solid #696969;border-bottom:1px solid #696969"></div>
<div class="t" style="left:1166.00px;top:569.84px;font-size:12px;line-height:12px;color:#ffff80;transform:scaleX(0.9869);transform-origin:0 0;">Theo</div>
<div style="left:1210px;top:563px;width:49px;height:24px;background:#000080;border-left:1px solid #fff;border-top:1px solid #fff;border-right:1px solid #696969;border-bottom:1px solid #696969"></div>
<div class="t" style="left:1215.80px;top:569.84px;font-size:12px;line-height:12px;color:#ffff80;transform:scaleX(0.9946);transform-origin:0 0;">Diff</div>
<div style="left:885px;top:981px;width:13px;height:13px;border:1px solid #333;background:#fff"></div>
<div class="t" style="left:900.40px;top:983.26px;font-size:11.5px;line-height:11.5px;color:#000;transform:scaleX(0.9055);transform-origin:0 0;">Show Live Values</div>
</body></html>
